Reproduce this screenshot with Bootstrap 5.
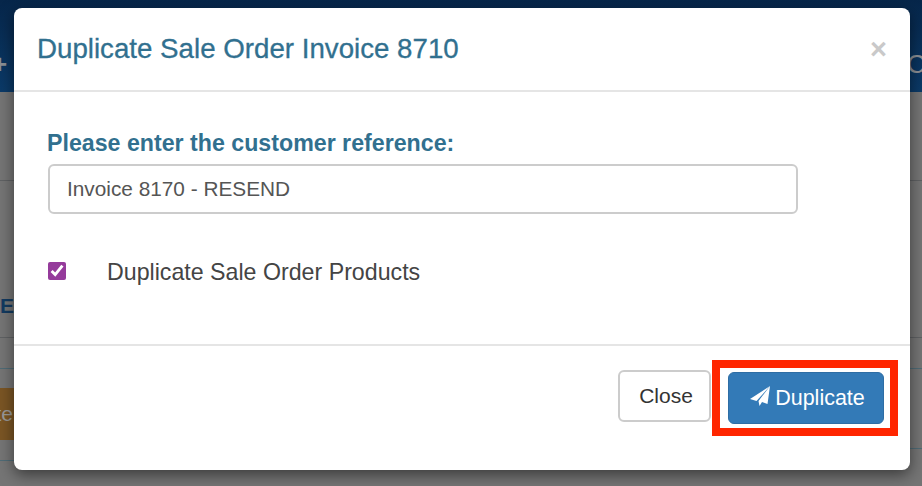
<!DOCTYPE html>
<html lang="en">
<head>
    <meta charset="UTF-8">
    <meta name="viewport" content="width=device-width, initial-scale=1.0">
    <title>Duplicate Sale Order</title>
    <link href="https://cdn.jsdelivr.net/npm/bootstrap@5.3.0/dist/css/bootstrap.min.css" rel="stylesheet">
    <style>
        html, body { height: 100%; }
        body {
            font-family: "Liberation Sans", Arial, sans-serif;
            background: #757575;
            overflow: hidden;
            position: relative;
        }
        .page-top {
            height: 92px;
            padding-top: 36px;
            background: linear-gradient(#06264a, #0b3a68);
            color: #8c8f94;
            font-size: 26px;
            white-space: nowrap;
        }
        .page-plus { margin-left: -8px; }
        .page-co { margin-right: -18px; }
        .page-row-a { height: 89px; border-bottom: 1px solid #5f6163; }
        .page-row-b { height: 157px; border-bottom: 1px solid #5f6163; }
        .page-row-c { height: 31px; border-bottom: 1px solid #4f6b76; }
        .page-word { color: #123a60; font-weight: 700; font-size: 21px; margin-bottom: 19px; line-height: 1.2; }
        .page-btn { width: 14px; height: 52px; background: #7a5524; margin-top: 19px; margin-bottom: 20px; color: #9a9a9a; font-size: 21px; overflow: hidden; white-space: nowrap; padding-right: 1px; }
        .page-line { width: 30px; height: 1px; background: #4f6b76; }
        .page-right { width: 12px; height: 80px; border-bottom: 1px solid #4f6b76; }
        .dup-dialog { position: absolute; left: 14px; top: 8px; width: 896px; height: 462px; }
        .dup-dialog .modal-content {
            height: 100%;
            background: #fff;
            border: 0;
            border-radius: 8px;
            box-shadow: 0 5px 15px rgba(0, 0, 0, .5);
        }
        .dup-dialog .modal-header { height: 84px; padding: 0 23px; border-bottom: 2px solid #e5e5e5; }
        .dup-dialog .modal-title { color: #31708f; font-size: 27.7px; font-weight: 400; -webkit-text-stroke: .3px #31708f; margin: 0; }
        .dup-close { color: #c9c9c9; font-size: 29px; font-weight: 700; line-height: 1; background: none; border: 0; padding: 0; }
        .dup-dialog .modal-body { padding: 37px 34px 0; flex: none; height: 252px; }
        .dup-label { color: #31708f; font-size: 23.2px; font-weight: 700; line-height: 28px; margin-bottom: 7px; margin-left: -1px; display: block; }
        .dup-input {
            width: 750px; height: 50px; padding: 0 17px;
            border: 2px solid #ccc; border-radius: 6px;
            font-size: 20.8px; color: #555;
        }
        .dup-check { margin-top: 41px; gap: 41px; color: #444; font-size: 23.2px; }
        .dup-check input { width: 18px; height: 18px; margin: 0 0 2px; accent-color: #953b9b; }
        .dup-dialog .modal-footer { height: 124px; padding: 24px 26px 0 0; border-top: 2px solid #e5e5e5; align-items: flex-start; gap: 17px; }
        .dup-dialog .modal-footer > * { margin: 0; }
        .btn-shut {
            width: 93px; height: 52px; padding: 0 0 0 3px;
            border: 2px solid #ccc; border-radius: 6px;
            background: #fff; color: #333; font-size: 21px;
        }
        .btn-send {
            width: 156px; height: 52px; padding: 0 0 0 3px;
            margin-top: 2px !important;
            background: #337ab7; border: 1px solid #2e6da4; border-radius: 6px;
            color: #fff; font-size: 21.5px; gap: 5px;
        }
        .btn-send svg { margin-bottom: 5px; }
        .red-box { position: absolute; left: 712px; top: 360px; width: 186px; height: 76px; border: 8px solid #ff2600; }
    </style>
</head>
<body>
    <div class="page-top d-flex justify-content-between align-items-center">
        <span class="page-plus fw-bold">+</span>
        <span class="page-co">Co</span>
    </div>
    <div class="page-row-a"></div>
    <div class="page-row-b d-flex align-items-end"><span class="page-word">En</span></div>
    <div class="page-row-c"></div>
    <div class="d-flex justify-content-between">
        <div>
            <div class="page-btn d-flex align-items-center justify-content-end">ate</div>
            <div class="page-line"></div>
        </div>
        <div class="page-right"></div>
    </div>

    <div class="dup-dialog">
        <div class="modal-content">
            <div class="modal-header">
                <h4 class="modal-title">Duplicate Sale Order Invoice 8710</h4>
                <button type="button" class="dup-close">&times;</button>
            </div>
            <div class="modal-body">
                <label class="dup-label" for="custref">Please enter the customer reference:</label>
                <input type="text" id="custref" class="dup-input d-block" value="Invoice 8170 - RESEND">
                <div class="dup-check d-flex align-items-center">
                    <input type="checkbox" id="dupprod" checked>
                    <label for="dupprod">Duplicate Sale Order Products</label>
                </div>
            </div>
            <div class="modal-footer">
                <button type="button" class="btn btn-shut">Close</button>
                <button type="button" class="btn btn-send d-flex align-items-center justify-content-center">
                    <svg width="20" height="20" viewBox="0 0 20 20" fill="#fff"><path d="M20 0 L0 13 L6.5 15 Z"/><path d="M20 0 L8.5 15 L9.5 20 L12 16 L17.5 18 Z"/></svg>
                    <span>Duplicate</span>
                </button>
            </div>
        </div>
    </div>
    <div class="red-box"></div>
    <script src="https://cdn.jsdelivr.net/npm/bootstrap@5.3.0/dist/js/bootstrap.bundle.min.js"></script>
</body>
</html>
